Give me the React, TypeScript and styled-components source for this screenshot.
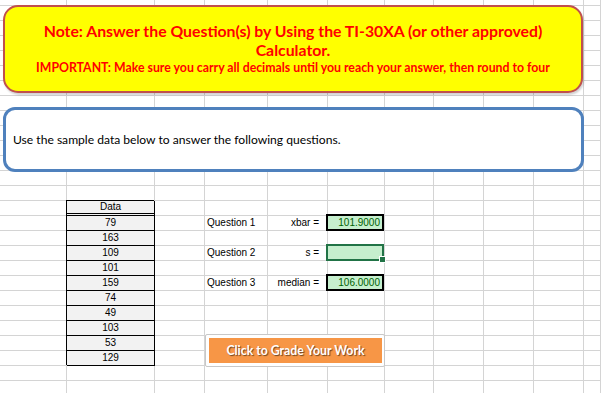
import React from "react";
import styled, { createGlobalStyle, css } from "styled-components";

const GlobalStyle = createGlobalStyle`
  html, body {
    margin: 0;
    padding: 0;
    background: #ffffff;
    overflow: hidden;
  }
`;

const COLS = [67, 88, 50, 63, 60, 57, 49, 50, 50, 50, 17];
const ROW_COUNT = 27;
const DATA = [79, 163, 109, 101, 159, 74, 49, 103, 53, 129];

type Kind = "blank" | "head" | "data" | "label" | "eq" | "answer" | "selected";

interface CellInfo {
  kind: Kind;
  text?: string;
}

const QUESTIONS: Record<number, { label: string; eq: string; value?: string }> = {
  15: { label: "Question 1", eq: "xbar =", value: "101.9000" },
  17: { label: "Question 2", eq: "s =" },
  19: { label: "Question 3", eq: "median =", value: "106.0000" },
};

const cellAt = (r: number, c: number): CellInfo => {
  if (c === 1 && r === 14) return { kind: "head", text: "Data" };
  if (c === 1 && r >= 15 && r < 15 + DATA.length)
    return { kind: "data", text: String(DATA[r - 15]) };
  const q = QUESTIONS[r];
  if (q) {
    if (c === 3) return { kind: "label", text: q.label };
    if (c === 4) return { kind: "eq", text: q.eq };
    if (c === 5) return q.value ? { kind: "answer", text: q.value } : { kind: "selected" };
  }
  return { kind: "blank" };
};

const Page = styled.div`
  position: relative;
  width: 601px;
  height: 393px;
  overflow: hidden;
  background: #ffffff;
`;

const Sheet = styled.div`
  display: grid;
  grid-template-columns: ${COLS.map((w) => `${w}px`).join(" ")};
  grid-template-rows: 6px repeat(${ROW_COUNT - 1}, 15px);
  font-family: "Liberation Sans", Arial, sans-serif;
  font-size: 10px;
  color: #000000;
`;

const Cell = styled.div<{ $kind: Kind }>`
  position: relative;
  box-sizing: border-box;
  border-right: 1px solid #d4d4d4;
  border-bottom: 1px solid #d4d4d4;
  display: flex;
  align-items: center;
  white-space: nowrap;
  line-height: 14px;

  ${({ $kind }) =>
    ($kind === "head" || $kind === "data") &&
    css`
      justify-content: center;
      background: #f2f2f2;
      border-right-color: #000000;
      border-bottom-color: #000000;
      box-shadow: -1px -1px 0 #000000;
    `}

  ${({ $kind }) =>
    $kind === "head" &&
    css`
      border-bottom: 3px double #000000;
      line-height: 12px;
    `}

  ${({ $kind }) =>
    $kind === "label" &&
    css`
      padding-left: 2px;
    `}

  ${({ $kind }) =>
    $kind === "eq" &&
    css`
      justify-content: flex-end;
      padding-right: 8px;
    `}

  ${({ $kind }) =>
    $kind === "answer" &&
    css`
      justify-content: flex-end;
      padding-right: 4px;
      background: #c6efce;
      color: #006100;
      &::after {
        content: "";
        position: absolute;
        top: -2px;
        left: -2px;
        right: 0;
        bottom: -1px;
        border: 2px solid #000000;
      }
    `}

  ${({ $kind }) =>
    $kind === "selected" &&
    css`
      background: #c6efce;
      &::after {
        content: "";
        position: absolute;
        top: -2px;
        left: -2px;
        right: 0;
        bottom: -1px;
        border: 2px solid #217346;
      }
      &::before {
        content: "";
        position: absolute;
        right: -2px;
        bottom: -3px;
        width: 5px;
        height: 5px;
        background: #217346;
        border: 1px solid #ffffff;
        z-index: 2;
      }
    `}
`;

/* floating shapes drawn over the sheet, as Excel does */
const NoteBox = styled.div`
  position: absolute;
  left: 3px;
  top: 5px;
  width: 580px;
  height: 88px;
  box-sizing: border-box;
  background: #ffff00;
  border: 2px solid #c0504d;
  border-radius: 15px;
  box-shadow: 1px 2px 2px rgba(0, 0, 0, 0.18);
  display: flex;
  flex-direction: column;
  justify-content: center;
  align-items: center;
  text-align: center;
  font-family: Lato, "Open Sans", sans-serif;
  font-weight: 700;
  color: #ff0000;
`;

const NoteTitle = styled.div`
  font-size: 15.8px;
  line-height: 19px;
`;

const NoteImportant = styled.div`
  font-size: 12.3px;
  line-height: 18px;
  white-space: nowrap;
`;

const InfoBox = styled.div`
  position: absolute;
  left: 3px;
  top: 107px;
  width: 581px;
  height: 65px;
  box-sizing: border-box;
  background: #ffffff;
  border: 3px solid #4f81bd;
  border-radius: 12px;
  display: flex;
  align-items: center;
  padding-left: 7px;
  font-family: Lato, "Open Sans", sans-serif;
  font-size: 12.1px;
  color: #000000;
`;

const GradeFrame = styled.div`
  position: absolute;
  left: 205px;
  top: 334px;
  width: 180px;
  height: 33px;
  box-sizing: border-box;
  background: #ffffff;
  border: 1px solid #c8c8c8;
  border-radius: 2px;
  padding: 3px 2px 3px 3px;
  display: flex;
`;

const GradeButton = styled.button`
  flex: 1;
  border: none;
  margin: 0;
  padding: 0;
  background: #f79646;
  color: #ffffff;
  font-family: Lato, "Open Sans", sans-serif;
  font-weight: 700;
  font-size: 12.3px;
  text-shadow: 1px 1px 1px rgba(0, 0, 0, 0.55);
  cursor: pointer;
`;

export default function App() {
  const cells: React.ReactNode[] = [];
  for (let r = 0; r < ROW_COUNT; r++) {
    for (let c = 0; c < COLS.length; c++) {
      const info = cellAt(r, c);
      cells.push(
        <Cell key={`${r}-${c}`} $kind={info.kind}>
          {info.text}
        </Cell>
      );
    }
  }

  return (
    <>
      <GlobalStyle />
      <Page>
        <Sheet>{cells}</Sheet>
        <NoteBox>
          <NoteTitle>
            Note: Answer the Question(s) by Using the TI-30XA (or other approved)
            <br />
            Calculator.
          </NoteTitle>
          <NoteImportant>
            IMPORTANT: Make sure you carry all decimals until you reach your answer, then round to four
          </NoteImportant>
        </NoteBox>
        <InfoBox>Use the sample data below to answer the following questions.</InfoBox>
        <GradeFrame>
          <GradeButton>Click to Grade Your Work</GradeButton>
        </GradeFrame>
      </Page>
    </>
  );
}
